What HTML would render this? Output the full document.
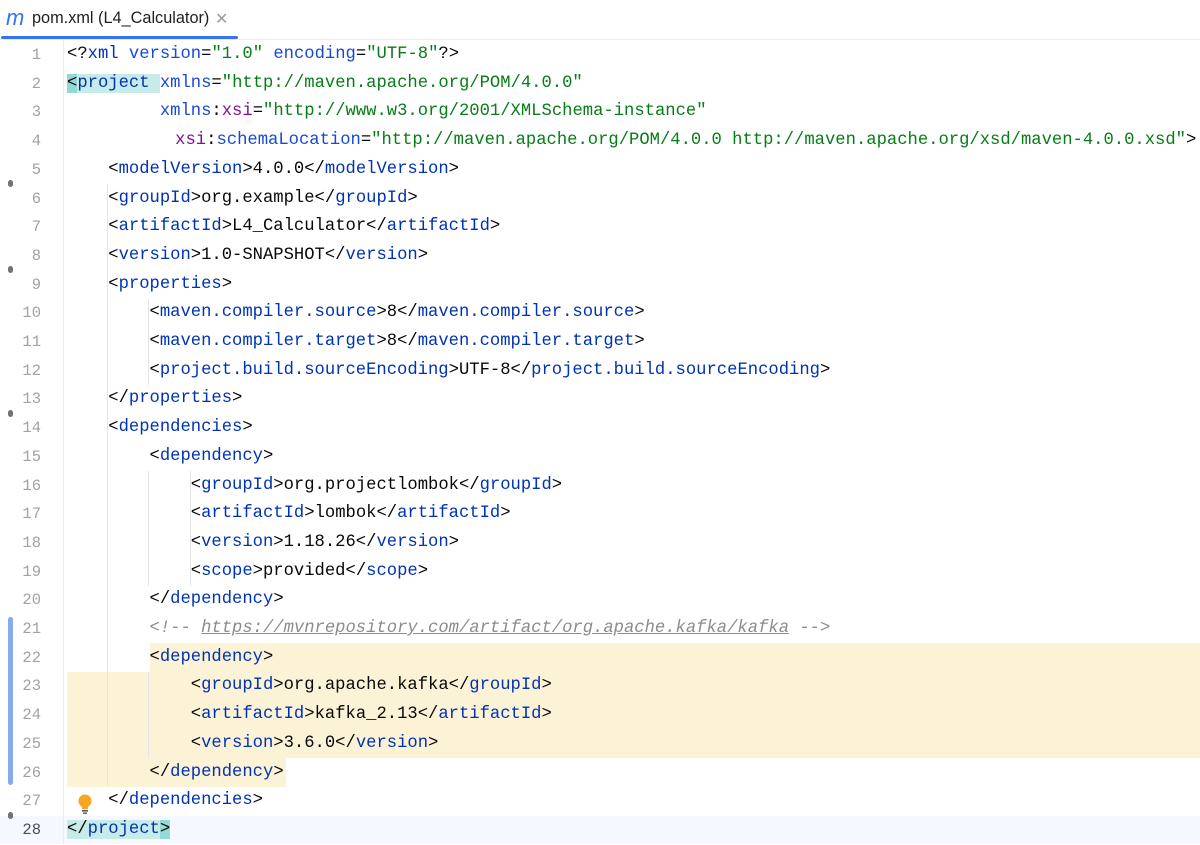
<!DOCTYPE html>
<html><head><meta charset="utf-8"><style>
body{margin:0;width:1200px;height:844px;background:#fff;overflow:hidden;position:relative;font-family:"Liberation Mono",monospace}
.tab{position:absolute;left:0;top:0;width:1200px;height:39px;border-bottom:1px solid #ebecf0;background:#fff}
.tabtxt{position:absolute;left:32px;top:9px;font:16.3px "Liberation Sans",sans-serif;color:#1e1f22}
.m{position:absolute;left:6px;top:5px;font:italic 22px "Liberation Sans",sans-serif;color:#3574f0}
.x{position:absolute;left:215px;top:9px;font:16px "Liberation Sans",sans-serif;color:#9a9ca3}
.ul{position:absolute;left:1px;top:36px;width:237px;height:3px;background:#3574f0;border-radius:2px}
.row{position:absolute;left:0;width:1200px;height:28.7px;line-height:28.7px;font-size:17.2px;white-space:pre}
.n{position:absolute;left:0;width:41px;text-align:right;color:#9fa2ab;font-size:15.5px}
.c{position:absolute;left:67px;color:#080808}
.t{color:#0033b3}.a{color:#174ad4}.p{color:#871094}.s{color:#067d17}.cm{color:#8c8c8c;font-style:italic}.u{text-decoration:underline}
.hl{background:#c6ebe9}.hb{background:#93d9d5}
.sep{position:absolute;left:63px;top:40px;width:1px;height:804px;background:#ebecf0}
.guide{position:absolute;width:1px;background:#e4e5ea}
.dot{position:absolute;left:8px;width:5px;height:7px;border-radius:3px;background:#6f737a}
</style></head><body>
<div class="tab"><span class="m">m</span><span class="tabtxt">pom.xml (L4_Calculator)</span><span class="x">✕</span><div class="ul"></div></div>

<div style="position:absolute;left:150px;top:643px;width:1050px;height:29px;background:#fcf2d6"></div>
<div style="position:absolute;left:67px;top:672px;width:1133px;height:86px;background:#fcf2d6"></div>
<div style="position:absolute;left:67px;top:758px;width:219px;height:29px;background:#fcf2d6"></div>
<div style="position:absolute;left:0;top:816px;width:1200px;height:28px;background:#f5f8fe"></div>
<div class="sep"></div>
<div class="guide" style="left:107px;top:184px;height:602px"></div>
<div class="guide" style="left:148px;top:299px;height:86px"></div>
<div class="guide" style="left:148px;top:471px;height:115px"></div>
<div class="guide" style="left:190px;top:471px;height:115px"></div>
<div class="guide" style="left:148px;top:672px;height:86px"></div>
<div style="position:absolute;left:8px;top:617px;width:5px;height:168px;background:#87a9f0;border-radius:3px"></div>
<div class="dot" style="top:180px"></div><div class="dot" style="top:266px"></div><div class="dot" style="top:410px"></div><div class="dot" style="top:812px"></div>
<svg style="position:absolute;left:76px;top:793px" width="18" height="22" viewBox="0 0 18 22"><circle cx="9" cy="8" r="6.5" fill="#f5a623"/><rect x="6" y="13" width="6" height="3" fill="#f5a623"/><rect x="6" y="17" width="6" height="1.6" fill="#555"/><rect x="7" y="19.5" width="4" height="1.4" fill="#555"/></svg>

<div class="row" style="top:41px"><span class="n">1</span><span class="c">&lt;?<span class="t">xml</span> <span class="a">version</span>=<span class="s">"1.0"</span> <span class="a">encoding</span>=<span class="s">"UTF-8"</span>?&gt;</span></div>
<div class="row" style="top:69.7px"><span class="n">2</span><span class="c"><span class="hb">&lt;</span><span class="hl t">project </span><span class="a">xmlns</span>=<span class="s">"http://maven.apache.org/POM/4.0.0"</span></span></div>
<div class="row" style="top:98.4px"><span class="n">3</span><span class="c">         <span class="a">xmlns</span>:<span class="p">xsi</span>=<span class="s">"http://www.w3.org/2001/XMLSchema-instance"</span></span></div>
<div class="row" style="top:127.1px"><span class="n">4</span><span class="c" style="left:72px">          <span class="p">xsi</span>:<span class="a">schemaLocation</span>=<span class="s">"http://maven.apache.org/POM/4.0.0 http://maven.apache.org/xsd/maven-4.0.0.xsd"</span>&gt;</span></div>
<div class="row" style="top:155.8px"><span class="n">5</span><span class="c">    &lt;<span class="t">modelVersion</span>&gt;4.0.0&lt;/<span class="t">modelVersion</span>&gt;</span></div>
<div class="row" style="top:184.5px"><span class="n">6</span><span class="c">    &lt;<span class="t">groupId</span>&gt;org.example&lt;/<span class="t">groupId</span>&gt;</span></div>
<div class="row" style="top:213.2px"><span class="n">7</span><span class="c">    &lt;<span class="t">artifactId</span>&gt;L4_Calculator&lt;/<span class="t">artifactId</span>&gt;</span></div>
<div class="row" style="top:241.9px"><span class="n">8</span><span class="c">    &lt;<span class="t">version</span>&gt;1.0-SNAPSHOT&lt;/<span class="t">version</span>&gt;</span></div>
<div class="row" style="top:270.6px"><span class="n">9</span><span class="c">    &lt;<span class="t">properties</span>&gt;</span></div>
<div class="row" style="top:299.3px"><span class="n">10</span><span class="c">        &lt;<span class="t">maven.compiler.source</span>&gt;8&lt;/<span class="t">maven.compiler.source</span>&gt;</span></div>
<div class="row" style="top:328px"><span class="n">11</span><span class="c">        &lt;<span class="t">maven.compiler.target</span>&gt;8&lt;/<span class="t">maven.compiler.target</span>&gt;</span></div>
<div class="row" style="top:356.7px"><span class="n">12</span><span class="c">        &lt;<span class="t">project.build.sourceEncoding</span>&gt;UTF-8&lt;/<span class="t">project.build.sourceEncoding</span>&gt;</span></div>
<div class="row" style="top:385.4px"><span class="n">13</span><span class="c">    &lt;/<span class="t">properties</span>&gt;</span></div>
<div class="row" style="top:414.1px"><span class="n">14</span><span class="c">    &lt;<span class="t">dependencies</span>&gt;</span></div>
<div class="row" style="top:442.8px"><span class="n">15</span><span class="c">        &lt;<span class="t">dependency</span>&gt;</span></div>
<div class="row" style="top:471.5px"><span class="n">16</span><span class="c">            &lt;<span class="t">groupId</span>&gt;org.projectlombok&lt;/<span class="t">groupId</span>&gt;</span></div>
<div class="row" style="top:500.2px"><span class="n">17</span><span class="c">            &lt;<span class="t">artifactId</span>&gt;lombok&lt;/<span class="t">artifactId</span>&gt;</span></div>
<div class="row" style="top:528.9px"><span class="n">18</span><span class="c">            &lt;<span class="t">version</span>&gt;1.18.26&lt;/<span class="t">version</span>&gt;</span></div>
<div class="row" style="top:557.6px"><span class="n">19</span><span class="c">            &lt;<span class="t">scope</span>&gt;provided&lt;/<span class="t">scope</span>&gt;</span></div>
<div class="row" style="top:586.3px"><span class="n">20</span><span class="c">        &lt;/<span class="t">dependency</span>&gt;</span></div>
<div class="row" style="top:615px"><span class="n">21</span><span class="c">        <span class="cm">&lt;!-- <span class="u">https://mvnrepository.com/artifact/org.apache.kafka/kafka</span> --&gt;</span></span></div>
<div class="row" style="top:643.7px"><span class="n">22</span><span class="c">        &lt;<span class="t">dependency</span>&gt;</span></div>
<div class="row" style="top:672.4px"><span class="n">23</span><span class="c">            &lt;<span class="t">groupId</span>&gt;org.apache.kafka&lt;/<span class="t">groupId</span>&gt;</span></div>
<div class="row" style="top:701.1px"><span class="n">24</span><span class="c">            &lt;<span class="t">artifactId</span>&gt;kafka_2.13&lt;/<span class="t">artifactId</span>&gt;</span></div>
<div class="row" style="top:729.8px"><span class="n">25</span><span class="c">            &lt;<span class="t">version</span>&gt;3.6.0&lt;/<span class="t">version</span>&gt;</span></div>
<div class="row" style="top:758.5px"><span class="n">26</span><span class="c">        &lt;/<span class="t">dependency</span>&gt;</span></div>
<div class="row" style="top:787.2px"><span class="n">27</span><span class="c">    &lt;/<span class="t">dependencies</span>&gt;</span></div>
<div class="row" style="top:815.9px"><span class="n" style="color:#4a4d55">28</span><span class="c"><span class="hl">&lt;/<span class="t">project</span></span><span class="hb">&gt;</span></span></div>
</body></html>
